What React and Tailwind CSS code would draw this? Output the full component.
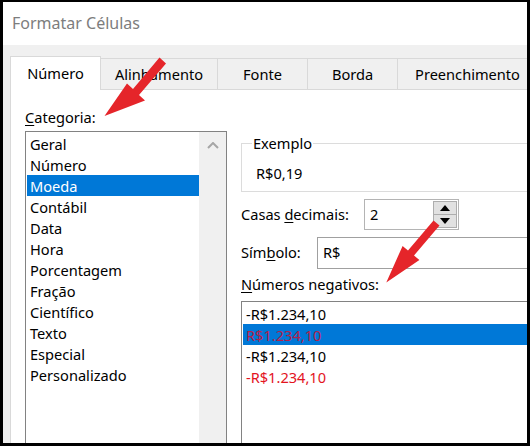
import React from 'react';

const categorias = [
  'Geral',
  'Número',
  'Moeda',
  'Contábil',
  'Data',
  'Hora',
  'Porcentagem',
  'Fração',
  'Científico',
  'Texto',
  'Especial',
  'Personalizado',
];

function Tab({ label, active, width }) {
  if (active) {
    return (
      <div
        className="flex h-[34px] shrink-0 items-center justify-center border border-b-0 border-[#d9d9d9] bg-white pt-[1px]"
        style={{ width }}
      >
        {label}
      </div>
    );
  }
  return (
    <div
      className="flex h-[32px] shrink-0 items-center justify-center border border-l-0 border-[#d9d9d9] bg-[#f0f0f0] pt-[1px]"
      style={{ width }}
    >
      {label}
    </div>
  );
}

function Spinner() {
  return (
    <div className="mr-[1px] flex w-[24px] flex-col">
      <div className="flex h-[14px] items-center justify-center border border-[#adadad] bg-[#e1e1e1]">
        <svg width="10" height="6" viewBox="0 0 10 6">
          <polygon points="0,6 10,6 5,0" fill="#000" />
        </svg>
      </div>
      <div className="-mt-px flex h-[14px] items-center justify-center border border-[#adadad] bg-[#e1e1e1]">
        <svg width="10" height="6" viewBox="0 0 10 6">
          <polygon points="0,0 10,0 5,6" fill="#000" />
        </svg>
      </div>
    </div>
  );
}

function Arrows() {
  return (
    <svg
      className="pointer-events-none absolute left-0 top-0"
      width="530"
      height="446"
      viewBox="0 0 530 446"
    >
      <polygon
        points="159.5,57.5 166,63.5 139,95 145,100.5 104.5,116 127,83.5 133,89"
        fill="#e5252a"
      />
      <polygon
        points="433.5,220.4 439.5,225.6 414,255.6 419.4,260 386.3,282.5 402.6,245.9 408,250.4"
        fill="#e5252a"
      />
    </svg>
  );
}

// rows of both list boxes
const row = 'h-[21px] pl-[3px] pt-[2px] leading-[19px]';

export default function App() {
  return (
    <div className="relative h-[446px] w-[530px] overflow-hidden bg-black pb-[3px] pl-[3px] pr-[3px] pt-[2px] font-['Noto_Sans',sans-serif] text-[14.6px] text-black">
      <div className="flex h-full flex-col overflow-hidden bg-[#f0f0f0]">
        {/* Title */}
        <div className="h-[43px] shrink-0 bg-white pl-[9px] pt-[9px] text-[16px] leading-[24px] text-[#7d7d7d]">
          Formatar Células
        </div>

        {/* Tabs */}
        <div className="mt-[11px] flex h-[34px] shrink-0 items-end overflow-hidden pl-[7px]">
          <Tab label="Número" active width={91} />
          <Tab label="Alinhamento" width={117} />
          <Tab label="Fonte" width={90} />
          <Tab label="Borda" width={90} />
          <Tab label="Preenchimento" width={140} />
        </div>

        {/* Panel */}
        <div className="ml-[7px] flex min-h-0 flex-1 overflow-hidden border-l border-[#d9d9d9] bg-white">
          {/* Categoria */}
          <div className="w-[216px] shrink-0 pl-[14px] pt-[17px]">
            <div className="leading-[20px]">
              <u className="underline-offset-2">C</u>ategoria:
            </div>
            <div className="mt-[4px] flex h-[400px] w-[202px] border border-[#828282]">
              <div className="w-[173px] pl-[1px] pt-[1px]">
                {categorias.map((c) => (
                  <div
                    key={c}
                    className={c === 'Moeda' ? row + ' bg-[#0078d7] text-white' : row}
                  >
                    {c}
                  </div>
                ))}
              </div>
              <div className="flex flex-1 justify-center bg-[#f0f0f0] pt-[10px]">
                <svg width="12" height="7" viewBox="0 0 12 7">
                  <polyline points="1,6 6,1 11,6" fill="none" stroke="#a6a6a6" strokeWidth="2" />
                </svg>
              </div>
            </div>
          </div>

          {/* Right side */}
          <div className="min-w-0 flex-1 pl-[14px] pt-[43px]">
            <fieldset className="w-[320px] border border-[#dcdcdc] pb-[8px] pl-[10px]">
              <legend className="px-[1px] leading-[20px]">Exemplo</legend>
              <div className="mt-[10px] pl-[4px] leading-[20px]">R$0,19</div>
            </fieldset>

            <div className="mt-[7px] flex h-[31px] items-center">
              <div className="w-[123px] shrink-0 pt-[1px]">
                Casas <u className="underline-offset-2">d</u>ecimais:
              </div>
              <div className="flex h-[31px] w-[95px] shrink-0 items-center border border-[#b4b4b4]">
                <div className="flex-1 pl-[5px]">2</div>
                <Spinner />
              </div>
            </div>

            <div className="mt-[7px] flex h-[32px] items-center">
              <div className="w-[76px] shrink-0">
                Sím<u className="underline-offset-2">b</u>olo:
              </div>
              <div className="flex h-[32px] w-[240px] shrink-0 items-center border border-[#a0a0a0] pl-[5px]">
                R$
              </div>
            </div>

            <div className="mt-[5px] leading-[20px]">
              <u className="underline-offset-2">N</u>úmeros negativos:
            </div>

            <div className="mt-[7px] h-[200px] w-[320px] border border-[#828282] pl-[1px] pt-[1px]">
              <div className={row}>-R$1.234,10</div>
              <div className={row + ' bg-[#0078d7] text-[#b3204a]'}>R$1.234,10</div>
              <div className={row}>-R$1.234,10</div>
              <div className={row + ' text-[#e3141e]'}>-R$1.234,10</div>
            </div>
          </div>
        </div>
      </div>
      <Arrows />
    </div>
  );
}
